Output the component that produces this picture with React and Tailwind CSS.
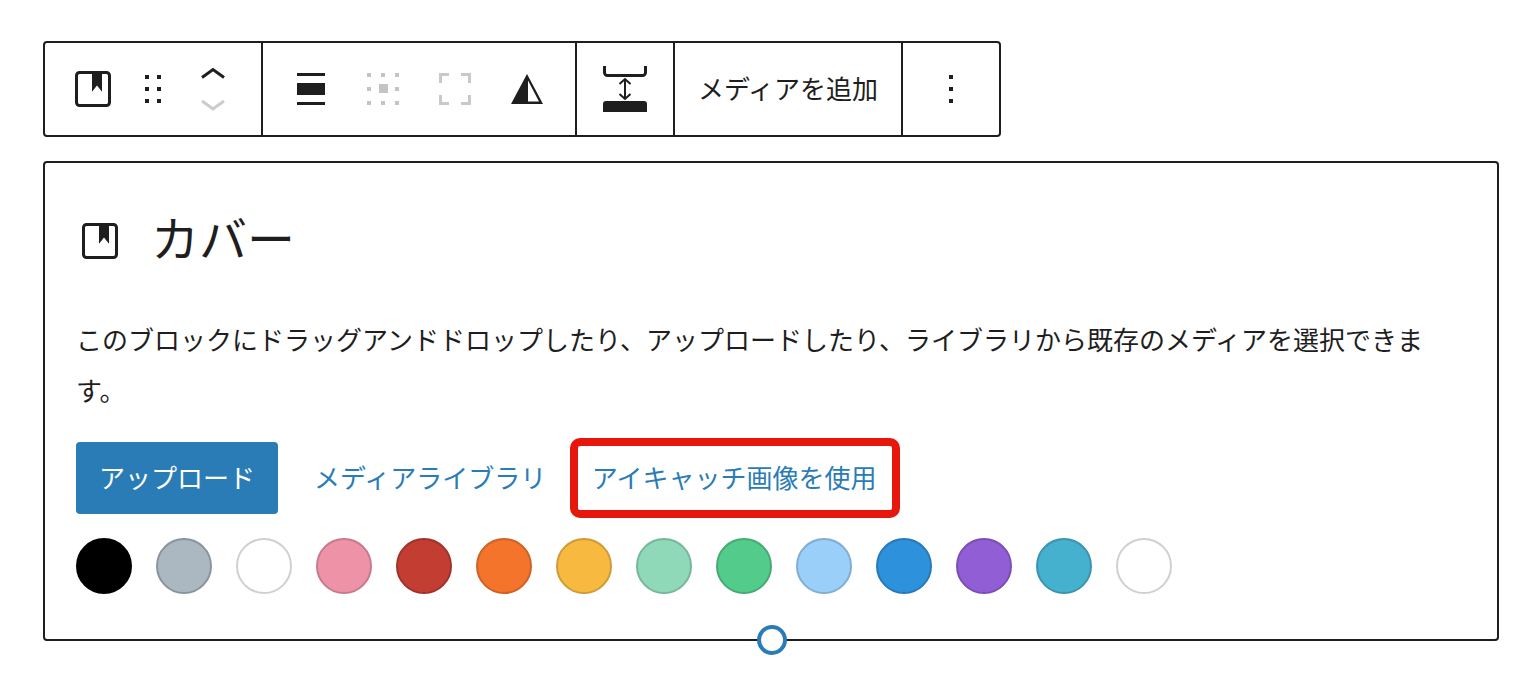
const swatches = [
    'bg-black border-black',
    'bg-[#abb7c1] border-[#8a949e]',
    'bg-white border-[#d0d0d0]',
    'bg-[#ee92a7] border-[#c67a8c]',
    'bg-[#c43d33] border-[#a0322b]',
    'bg-[#f5742b] border-[#cf6124]',
    'bg-[#f7b93f] border-[#cf9b35]',
    'bg-[#8fd9b8] border-[#78b69a]',
    'bg-[#52cb8b] border-[#45aa74]',
    'bg-[#99cff9] border-[#80add1]',
    'bg-[#2d91dc] border-[#267ab8]',
    'bg-[#925ed6] border-[#7a4fb3]',
    'bg-[#45b1cf] border-[#3a94ad]',
    'bg-white border-[#d0d0d0]',
];

const CoverIcon = () => (
    <svg width="48" height="48" viewBox="0 0 24 24" fill="#1e1e1e">
        <path d="M18.7 3H5.3C4 3 3 4 3 5.3v13.4C3 20 4 21 5.3 21h13.4c1.3 0 2.3-1 2.3-2.3V5.3C21 4 20 3 18.7 3zm.8 15.7c0 .4-.4.8-.8.8H5.3c-.4 0-.8-.4-.8-.8V5.3c0-.4.4-.8.8-.8h6.2v8.9l2.5-3.1 2.500 3.100V4.500h2.200c.4 0 .8.4.8.8v13.4z" />
    </svg>
);

const DragIcon = () => (
    <svg width="48" height="48" viewBox="0 0 24 24" fill="#1e1e1e">
        <path d="M8 7h2V5H8v2zm0 6h2v-2H8v2zm0 6h2v-2H8v2zm6-14v2h2V5h-2zm0 8h2v-2h-2v2zm0 6h2v-2h-2v2z" />
    </svg>
);

const MoverIcon = () => (
    <svg width="28" height="48" viewBox="0 0 28 48" fill="none" strokeWidth="3">
        <path d="M3 12.500l11-8 11 8" stroke="#1e1e1e" />
        <path d="M3 36l11 8 11-8" stroke="#cccccc" />
    </svg>
);

const AlignFullIcon = () => (
    <svg width="28" height="32" viewBox="0 0 28 32" fill="#1e1e1e">
        <rect y="0" width="28" height="3" />
        <rect y="10" width="28" height="12" />
        <rect y="29" width="28" height="3" />
    </svg>
);

const PositionIcon = () => (
    <svg width="32" height="32" viewBox="0 0 32 32" fill="#c4c4c4">
        <rect x="0" y="0" width="4" height="4" />
        <rect x="14" y="0" width="4" height="4" />
        <rect x="28" y="0" width="4" height="4" />
        <rect x="0" y="14" width="4" height="4" />
        <rect x="12" y="11" width="9" height="9" />
        <rect x="28" y="14" width="4" height="4" />
        <rect x="0" y="28" width="4" height="4" />
        <rect x="14" y="28" width="4" height="4" />
        <rect x="28" y="28" width="4" height="4" />
    </svg>
);

const FullHeightIcon = () => (
    <svg width="32" height="32" viewBox="0 0 32 32" fill="none" stroke="#c9c9c9" strokeWidth="3">
        <path d="M1.500 10V1.500H10M22 1.500h8.500V10M1.500 22v8.500H10M22 30.500h8.500V22" />
    </svg>
);

const ContrastIcon = () => (
    <svg width="32" height="30" viewBox="0 0 32 30">
        <path d="M16 0L32 30H0z" fill="#1e1e1e" />
        <path d="M17 6.500L28 27.500H17z" fill="#ffffff" />
    </svg>
);

const MinHeightIcon = () => (
    <svg width="44" height="46" viewBox="0 0 44 46" fill="none">
        <path d="M1.500 0v6.500a3 3 0 003 3h35a3 3 0 003-3V0" stroke="#1e1e1e" strokeWidth="3" />
        <path d="M22 13v20M16.500 18l5.500-5 5.500 5M16.500 28l5.500 5 5.500-5" stroke="#1e1e1e" strokeWidth="2" />
        <path d="M0 46V38a3 3 0 013-3h38a3 3 0 013 3v8z" fill="#1e1e1e" />
    </svg>
);

const MoreIcon = () => (
    <svg width="48" height="48" viewBox="0 0 24 24" fill="#1e1e1e">
        <path d="M13 19h-2v-2h2v2zm0-6h-2v-2h2v2zm0-6h-2V5h2v2z" />
    </svg>
);

export default function App() {
    return (
        <div className="min-h-screen bg-white pl-[43px] pt-[41px] text-[#1e1e1e] font-['Noto_Sans_CJK_JP','Noto_Sans',sans-serif]">
            <div className="flex h-[96px] w-[958px] rounded-[4px] border-2 border-[#1e1e1e]">
                <div className="flex w-[218px] items-center border-r-2 border-[#1e1e1e] pl-[24px]">
                    <CoverIcon />
                    <div className="ml-[12px]"><DragIcon /></div>
                    <div className="ml-[22px]"><MoverIcon /></div>
                </div>
                <div className="flex w-[314px] items-center border-r-2 border-[#1e1e1e] pl-[34px]">
                    <AlignFullIcon />
                    <div className="ml-[42px]"><PositionIcon /></div>
                    <div className="ml-[40px]"><FullHeightIcon /></div>
                    <div className="ml-[40px]"><ContrastIcon /></div>
                </div>
                <div className="flex w-[98px] items-center justify-center border-r-2 border-[#1e1e1e]">
                    <MinHeightIcon />
                </div>
                <div className="flex w-[228px] items-center justify-center border-r-2 border-[#1e1e1e] pb-[4px] text-[26px]">
                    メディアを追加
                </div>
                <div className="flex flex-1 items-center pl-[24px]">
                    <MoreIcon />
                </div>
            </div>

            <div className="relative mt-[24px] h-[480px] w-[1456px] rounded-[4px] border-2 border-[#1e1e1e] pl-[31px]">
                <div className="flex h-[108px] items-center pt-[48px]">
                    <CoverIcon />
                    <h2 className="mb-[10px] ml-[27px] text-[48px] leading-none font-normal">カバー</h2>
                </div>
                <p className="mt-[42px] w-[1360px] text-[26px] leading-[51px]">
                    このブロックにドラッグアンドドロップしたり、アップロードしたり、ライブラリから既存のメディアを選択できます。
                </p>
                <div className="mt-[23px] flex items-center text-[26px]">
                    <button className="h-[72px] w-[202px] rounded-[4px] bg-[#2a7cb7] pb-[4px] text-white">アップロード</button>
                    <span className="ml-[36px] pb-[4px] text-[#2a7cb7]">メディアライブラリ</span>
                    <span className="ml-[24px] flex h-[80px] w-[330px] items-center justify-center rounded-[10px] border-[8px] border-[#e8170d] pr-[2px] pb-[4px] text-[#2a7cb7]">
                        アイキャッチ画像を使用
                    </span>
                </div>
                <div className="mt-[20px] flex gap-[24px]">
                    {swatches.map((c, i) => (
                        <div key={i} className={`h-[56px] w-[56px] rounded-full border-2 ${c}`} />
                    ))}
                </div>
                <div className="absolute bottom-[-16px] left-[712px] h-[30px] w-[30px] rounded-full border-4 border-[#2a7cb7] bg-white" />
            </div>
        </div>
    );
}
